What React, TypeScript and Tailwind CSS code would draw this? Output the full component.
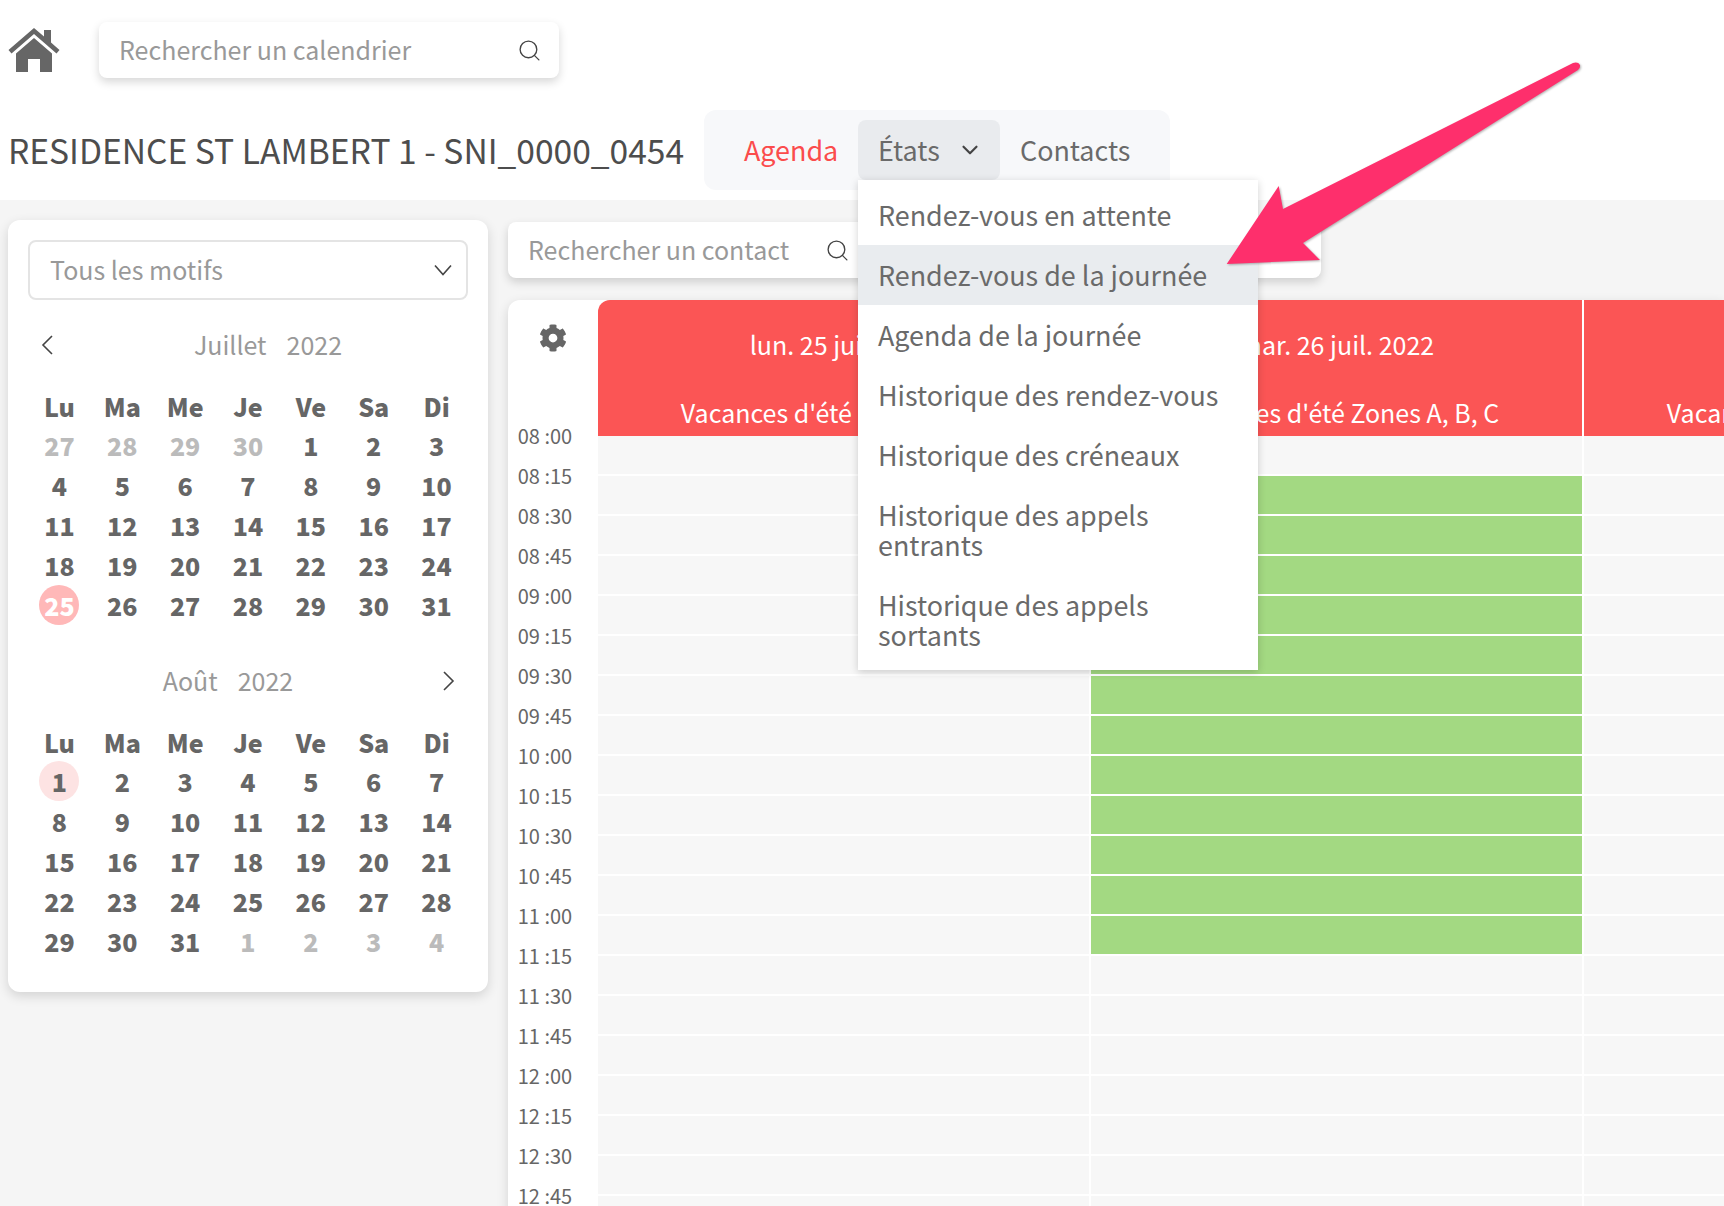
import { ChevronDown, Search } from "lucide-react";

const sans = "font-['Noto_Sans_CJK_SC','Noto_Sans',sans-serif]";

const weekDays = ["Lu", "Ma", "Me", "Je", "Ve", "Sa", "Di"];

const july = [
  [27, 28, 29, 30, 1, 2, 3],
  [4, 5, 6, 7, 8, 9, 10],
  [11, 12, 13, 14, 15, 16, 17],
  [18, 19, 20, 21, 22, 23, 24],
  [25, 26, 27, 28, 29, 30, 31],
];

const august = [
  [1, 2, 3, 4, 5, 6, 7],
  [8, 9, 10, 11, 12, 13, 14],
  [15, 16, 17, 18, 19, 20, 21],
  [22, 23, 24, 25, 26, 27, 28],
  [29, 30, 31, 1, 2, 3, 4],
];

const menuItems = [
  "Rendez-vous en attente",
  "Rendez-vous de la journée",
  "Agenda de la journée",
  "Historique des rendez-vous",
  "Historique des créneaux",
  "Historique des appels entrants",
  "Historique des appels sortants",
];

const times = [
  "08 :00", "08 :15", "08 :30", "08 :45", "09 :00", "09 :15", "09 :30", "09 :45",
  "10 :00", "10 :15", "10 :30", "10 :45", "11 :00", "11 :15", "11 :30", "11 :45",
  "12 :00", "12 :15", "12 :30", "12 :45",
];

function HomeIcon() {
  return (
    <svg width="52" height="44" viewBox="0 0 52 44" fill="#666666">
      <path d="M26 0 L36 8.5 V2 H43 V14.5 L51.5 22 L48.5 25.5 L26 6 L3.5 25.5 L0.5 22 Z" />
      <path d="M26 10 L44 25.5 V44 H32 V31 H20 V44 H8 V25.5 Z" />
    </svg>
  );
}

function GearIcon() {
  return (
    <svg width="28" height="28" viewBox="0 0 512 512" fill="#666666">
      <path d="M487.4 315.7l-42.6-24.6c4.3-23.2 4.3-47 0-70.2l42.6-24.6c4.9-2.8 7.1-8.6 5.5-14-11.1-35.6-30-67.8-54.7-94.6-3.8-4.1-10-5.1-14.8-2.3L380.8 110c-17.9-15.4-38.5-27.3-60.8-35.1V25.8c0-5.6-3.9-10.5-9.4-11.7-36.7-8.2-74.3-7.8-109.2 0-5.5 1.2-9.4 6.1-9.4 11.7V75c-22.2 7.9-42.8 19.8-60.8 35.1L88.7 85.5c-4.9-2.8-11-1.9-14.8 2.3-24.7 26.7-43.6 58.9-54.7 94.6-1.7 5.4.6 11.2 5.5 14L67.3 221c-4.3 23.2-4.3 47 0 70.2l-42.6 24.6c-4.9 2.8-7.1 8.6-5.5 14 11.1 35.6 30 67.8 54.7 94.6 3.8 4.1 10 5.1 14.8 2.3l42.6-24.6c17.9 15.4 38.5 27.3 60.8 35.1v49.2c0 5.6 3.9 10.5 9.4 11.7 36.7 8.2 74.3 7.8 109.2 0 5.5-1.2 9.4-6.1 9.4-11.7v-49.2c22.2-7.9 42.8-19.8 60.8-35.1l42.6 24.6c4.9 2.8 11 1.9 14.8-2.3 24.7-26.7 43.6-58.9 54.7-94.6 1.5-5.5-.7-11.3-5.6-14.1zM256 336c-44.1 0-80-35.9-80-80s35.9-80 80-80 80 35.9 80 80-35.9 80-80 80z" />
    </svg>
  );
}

function ThinChevronDown() {
  return (
    <svg width="18" height="12" viewBox="0 0 18 12" fill="none" stroke="#444444" strokeWidth="1.6">
      <path d="M1 1.5 L9 10.5 L17 1.5" />
    </svg>
  );
}

function ThinChevronSide({ left }: { left: boolean }) {
  return (
    <svg width="12" height="20" viewBox="0 0 12 20" fill="none" stroke="#444444" strokeWidth="1.6">
      <path d={left ? "M11 1 L2 10 L11 19" : "M1 1 L10 10 L1 19"} />
    </svg>
  );
}

function SearchBox({ placeholder, className, innerClass }: { placeholder: string; className: string; innerClass: string }) {
  return (
    <div
      className={`flex h-14 items-center rounded-lg bg-white pl-5 text-[25px] leading-none text-[#999999] shadow-[0_4px_10px_rgba(0,0,0,0.16)] ${className}`}
    >
      <div className={`flex items-center justify-between ${innerClass}`}>
        <span className="pb-0.5">{placeholder}</span>
        <Search size={25} strokeWidth={1.3} className="text-[#444444]" />
      </div>
    </div>
  );
}

function Month({
  weeks,
  name,
  year,
  left,
  fadedFrom,
  fadedUntil,
  dayClass,
}: {
  weeks: number[][];
  name: string;
  year: string;
  left: boolean;
  fadedFrom: number;
  fadedUntil: number;
  dayClass: (week: number, day: number) => string;
}) {
  return (
    <div>
      <div className="flex h-10 items-center text-[25px] leading-none text-[#999999]">
        {left && (
          <div className="ml-[13px] mr-[15px]">
            <ThinChevronSide left />
          </div>
        )}
        <div className="flex flex-1 justify-center gap-5 pb-0.5">
          <span>{name}</span>
          <span>{year}</span>
        </div>
        {!left && (
          <div className="ml-[15px] mr-[13px]">
            <ThinChevronSide left={false} />
          </div>
        )}
      </div>
      <div className="mt-[22px] grid grid-cols-7 text-center text-[25px] font-black leading-none text-[#666666]">
        {weekDays.map((day) => (
          <div key={day} className="flex h-[38px] items-center justify-center">
            {day}
          </div>
        ))}
        {weeks.map((week, w) =>
          week.map((day, d) => {
            const index = w * 7 + d;
            const faded = index < fadedUntil || index >= fadedFrom;
            return (
              <div key={index} className="flex h-10 items-center justify-center">
                <span
                  className={`flex h-10 w-10 items-center justify-center rounded-full ${faded ? "text-[#bbbbbb]" : ""} ${dayClass(w, d)}`}
                >
                  {day}
                </span>
              </div>
            );
          }),
        )}
      </div>
    </div>
  );
}

function Sidebar() {
  return (
    <aside className="h-[772px] w-[480px] shrink-0 rounded-xl bg-white px-5 pt-5 shadow-[0_4px_12px_rgba(0,0,0,0.14)]">
      <div className="flex h-[60px] items-center justify-between rounded-lg border-2 border-[#e4e4e4] pl-[20px] pr-[14px] text-[25px] leading-none text-[#999999]">
        <span className="pb-0.5">Tous les motifs</span>
        <ThinChevronDown />
      </div>
      <div className="mt-[25px]">
        <Month
          weeks={july}
          name="Juillet"
          year="2022"
          left
          fadedFrom={35}
          fadedUntil={4}
          dayClass={(w, d) => (w === 4 && d === 0 ? "bg-[#ffb8b8] text-white" : "")}
        />
      </div>
      <div className="mt-[36px]">
        <Month
          weeks={august}
          name="Août"
          year="2022"
          left={false}
          fadedFrom={31}
          fadedUntil={0}
          dayClass={(w, d) => (w === 0 && d === 0 ? "bg-[#fde3e3]" : "")}
        />
      </div>
    </aside>
  );
}

function DayHeader({ date, holiday }: { date: string; holiday: string }) {
  return (
    <div className="flex h-[136px] flex-col items-center overflow-hidden whitespace-nowrap bg-[#fb5555] text-[25px] leading-none text-white">
      <div className="mt-[32px]">{date}</div>
      <div className="mt-[43px]">{holiday}</div>
    </div>
  );
}

function DayColumn({ busyFrom, busyTo }: { busyFrom: number; busyTo: number }) {
  return (
    <div className="flex flex-col">
      {times.map((time, i) => (
        <div key={time} className={`h-10 border-b-2 border-white ${i >= busyFrom && i < busyTo ? "bg-[#a3d982]" : "bg-[#f7f7f7]"}`} />
      ))}
    </div>
  );
}

function Planning() {
  return (
    <div className="flex flex-1 overflow-hidden rounded-tl-xl bg-white shadow-[0_4px_12px_rgba(0,0,0,0.14)]">
      <div className="w-[90px] shrink-0">
        <div className="flex h-[136px] justify-center pt-[24px]">
          <GearIcon />
        </div>
        <div className="-mt-5 flex flex-col pr-[16px]">
          {times.map((time) => (
            <div key={time} className="flex h-10 items-center justify-center text-[20px] leading-none text-[#666666]">
              {time}
            </div>
          ))}
        </div>
      </div>
      <div className="grid flex-1 grid-cols-[493px_493px_491px] overflow-hidden rounded-tl-xl">
        <div className="border-r-2 border-white">
          <DayHeader date="lun. 25 juil. 2022" holiday="Vacances d'été Zones A, B, C" />
          <DayColumn busyFrom={-1} busyTo={-1} />
        </div>
        <div className="border-r-2 border-white">
          <DayHeader date="mar. 26 juil. 2022" holiday="Vacances d'été Zones A, B, C" />
          <DayColumn busyFrom={1} busyTo={13} />
        </div>
        <div>
          <DayHeader date="mer. 27 juil. 2022" holiday="Vacances d'été Zones A, B, C" />
          <DayColumn busyFrom={-1} busyTo={-1} />
        </div>
      </div>
    </div>
  );
}

function Tabs() {
  return (
    <div className="relative flex h-20 w-[466px] items-center rounded-xl bg-[#f7f8fa] pl-10 text-[26.9px] leading-none text-[#6a6a6a]">
      <span className="w-[94px] text-[#fb4c4c]">Agenda</span>
      <div className="ml-5 flex h-[60px] w-[142px] items-center rounded-lg bg-[#e9ebee] pl-5">
        <span>États</span>
        <ChevronDown size={26} strokeWidth={2} className="ml-[17px] text-[#444444]" />
      </div>
      <span className="ml-5">Contacts</span>
      <div className="absolute left-[154px] top-[70px] z-10 w-[400px] bg-white py-[5px] shadow-[0_2px_8px_rgba(0,0,0,0.18)]">
        {menuItems.map((item) => (
          <div
            key={item}
            className={`flex min-h-[60px] items-center px-5 py-[15px] text-[26.9px] leading-[30px] ${item === "Rendez-vous de la journée" ? "bg-[#e9ecef]" : ""}`}
          >
            <span className={item.includes("appels") ? "w-[280px]" : ""}>{item}</span>
          </div>
        ))}
      </div>
    </div>
  );
}

function Arrow() {
  return (
    <svg className="pointer-events-none absolute left-[1200px] top-[50px] z-20 drop-shadow-[1px_1px_1px_rgba(0,0,0,0.3)]" width="400" height="230" viewBox="0 0 400 230">
      <path d="M26.7 214 L78.7 136 L83 159 L373 13 Q378 11.5 380 15 Q380.5 18 378 20 L103 193 L120 210 Z" fill="#fe2f6c" />
    </svg>
  );
}

export default function App() {
  return (
    <div className={`relative h-[1206px] w-[1724px] overflow-hidden bg-[#f5f5f5] ${sans}`}>
      <header className="h-[200px] bg-white pl-2">
        <div className="flex items-center pt-[22px]">
          <HomeIcon />
          <SearchBox placeholder="Rechercher un calendrier" className="ml-[39px] w-[460px]" innerClass="w-[423px]" />
        </div>
        <div className="mt-8 flex items-center text-[33.6px] leading-none text-[#4d4d4d]">
          <h1 className="w-[696px] shrink-0 font-normal">RESIDENCE ST LAMBERT 1 - SNI_0000_0454</h1>
          <Tabs />
        </div>
      </header>
      <main className="flex gap-5 pl-2 pt-5">
        <Sidebar />
        <div className="flex min-w-0 flex-1 flex-col">
          <div className="pt-0.5">
            <SearchBox placeholder="Rechercher un contact" className="w-[813px]" innerClass="w-[322px]" />
          </div>
          <div className="mt-[22px] flex">
            <Planning />
          </div>
        </div>
      </main>
      <Arrow />
    </div>
  );
}
